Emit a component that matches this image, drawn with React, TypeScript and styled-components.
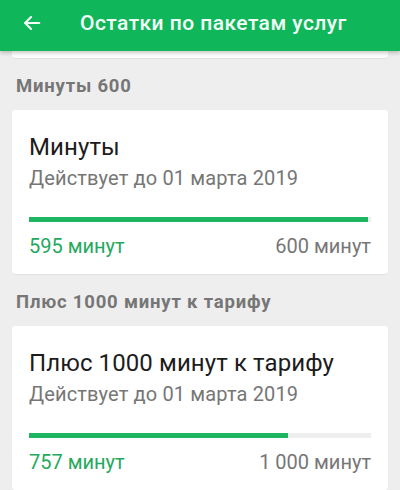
import React from 'react';
import styled, { createGlobalStyle } from 'styled-components';

interface PackageProps {
    section: string;
    title: string;
    until: string;
    used: number;
    total: number;
    usedLabel: string;
    totalLabel: string;
}

const packages: Array<PackageProps> = [
    {
        section: 'Минуты 600',
        title: 'Минуты',
        until: 'Действует до 01 марта 2019',
        used: 595,
        total: 600,
        usedLabel: '595 минут',
        totalLabel: '600 минут',
    },
    {
        section: 'Плюс 1000 минут к тарифу',
        title: 'Плюс 1000 минут к тарифу',
        until: 'Действует до 01 марта 2019',
        used: 757,
        total: 1000,
        usedLabel: '757 минут',
        totalLabel: '1 000 минут',
    },
];

const green = `#10b65a`;
const barGreen = `#1db55f`;
const textGreen = `#23a95e`;
const grey = `#767676`;

const GlobalStyle = createGlobalStyle`
    html, body {
        margin: 0;
        padding: 0;
        background: #eeeeee;
        font-family: Roboto, "Noto Sans", sans-serif;
    }
`;

const Screen = styled.div`
    width: 400px;
    height: 490px;
    overflow: hidden;
    background: #eeeeee;
    display: flex;
    flex-direction: column;
`;

const AppBar = styled.header`
    height: 51px;
    flex-shrink: 0;
    background: ${green};
    display: flex;
    align-items: center;
    padding: 0 0 0 20px;
    box-shadow: 0 2px 4px rgba(0, 0, 0, 0.22);
    position: relative;
    z-index: 1;
`;

const BackButton = styled.div`
    width: 24px;
    height: 24px;
    display: flex;
    align-items: center;
    justify-content: center;
    margin-right: 36px;
    margin-top: -6px;
    svg {
        width: 22px;
        height: 22px;
    }
`;

const AppTitle = styled.h1`
    margin: -6px 0 0;
    font-size: 21px;
    font-weight: 500;
    color: #f4fff8;
    letter-spacing: 0.45px;
`;

const Content = styled.main`
    padding: 0 12px;
    display: flex;
    flex-direction: column;
`;

const CardTail = styled.div`
    height: 7px;
    background: #fff;
    border-radius: 0 0 3px 3px;
    box-shadow: 0 1px 1px rgba(0, 0, 0, 0.06);
`;

const SectionTitle = styled.h2`
    margin: 17px 0 13px 4px;
    font-size: 18.5px;
    line-height: 22px;
    font-weight: 700;
    letter-spacing: 0.8px;
    color: ${grey};
`;

const Card = styled.section`
    background: #fff;
    border-radius: 3px;
    padding: 23px 17px 16px;
    box-shadow: 0 1px 1px rgba(0, 0, 0, 0.06);
`;

const CardTitle = styled.div`
    font-size: 24px;
    line-height: 28px;
    letter-spacing: 0.1px;
    color: #1c1c1c;
`;

const CardSubtitle = styled.div`
    margin-top: 5px;
    font-size: 20px;
    line-height: 24px;
    letter-spacing: 0.15px;
    color: ${grey};
`;

const Track = styled.div`
    margin-top: 27px;
    height: 5px;
    background: #eeeeee;
`;

const Fill = styled.div`
    height: 100%;
    background: ${barGreen};
`;

const Amounts = styled.div`
    margin-top: 12px;
    display: flex;
    justify-content: space-between;
    font-size: 20px;
    line-height: 24px;
`;

const Used = styled.span`
    color: ${textGreen};
`;

const Total = styled.span`
    color: ${grey};
`;

const ArrowBack = () => (
    <svg viewBox="0 0 24 24" fill="none" stroke="#f4fff8" strokeWidth="2.2" strokeLinecap="round" strokeLinejoin="round">
        <path d="M20 12H4.5" />
        <path d="M11 5.5 4.5 12l6.5 6.5" />
    </svg>
);

const PackageCard = ({ title, until, used, total, usedLabel, totalLabel }: PackageProps) => (
    <Card>
        <CardTitle>{title}</CardTitle>
        <CardSubtitle>{until}</CardSubtitle>
        <Track>
            <Fill style={{ width: `${(used / total) * 100}%` }} />
        </Track>
        <Amounts>
            <Used>{usedLabel}</Used>
            <Total>{totalLabel}</Total>
        </Amounts>
    </Card>
);

const App = () => {
    return (
        <>
            <GlobalStyle />
            <Screen>
                <AppBar>
                    <BackButton><ArrowBack /></BackButton>
                    <AppTitle>Остатки по пакетам услуг</AppTitle>
                </AppBar>
                <Content>
                    <CardTail />
                    {packages.map((p) => (
                        <React.Fragment key={p.section}>
                            <SectionTitle>{p.section}</SectionTitle>
                            <PackageCard {...p} />
                        </React.Fragment>
                    ))}
                </Content>
            </Screen>
        </>
    );
};

export default App;
